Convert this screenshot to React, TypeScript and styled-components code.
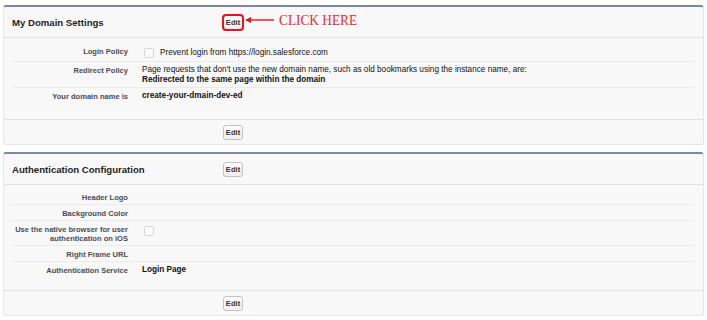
import React from "react";
import styled, { createGlobalStyle } from "styled-components";

const Global = createGlobalStyle`
  html, body { margin: 0; padding: 0; background: #ffffff; }
  body { font-family: "Liberation Sans", Arial, sans-serif; }
`;

const Page = styled.div`
  padding: 5px 3px;
  display: flex;
  flex-direction: column;
  gap: 7px;
`;

const Panel = styled.section`
  background: #f8f8f8;
  border: 1px solid #e6e6e6;
  border-top: 2px solid #7f899e;
  border-radius: 3px;
`;

const Header = styled.div`
  display: flex;
  align-items: center;
  height: 30px;
  padding-left: 8px;
  border-bottom: 1px solid #e2e2e2;
`;

const Title = styled.h2`
  margin: 0;
  width: 211px;
  font-size: 9.6px;
  font-weight: bold;
  color: #1e1e1e;
`;

const Button = styled.button<{ $highlight?: boolean }>`
  width: 20px;
  height: 15px;
  padding: 0;
  font-family: "Liberation Sans", Arial, sans-serif;
  font-size: 7.6px;
  font-weight: bold;
  color: #333;
  background: linear-gradient(#ffffff, #efefef);
  border: 1px solid #c2c2c2;
  border-radius: 3px;
  outline: ${(p) => (p.$highlight ? "2px solid #e8121c" : "none")};
  outline-offset: -1px;
`;

const Annotation = styled.div`
  display: flex;
  align-items: center;
  margin-left: 2px;
  margin-top: -4px;
  gap: 4px;
`;

const ClickHere = styled.span`
  font-family: "Liberation Serif", "Times New Roman", serif;
  font-size: 15.5px;
  color: #ee2a2e;
  display: inline-block;
  transform: scaleX(0.86);
  transform-origin: left center;
`;

const Body = styled.div<{ $bottom: number; $top: number }>`
  padding: ${(p) => p.$top}px 8px ${(p) => p.$bottom}px;
`;

const Row = styled.div<{ $last?: boolean }>`
  display: grid;
  grid-template-columns: 116px 1fr;
  column-gap: 14px;
  align-items: start;
  padding: 3px 0 2px;
  border-bottom: ${(p) => (p.$last ? "none" : "1px solid #ebebeb")};
`;

const Label = styled.div`
  text-align: right;
  font-size: 7.55px;
  line-height: 9px;
  font-weight: bold;
  color: #4b4b57;
  padding-top: 1px;
`;

const Value = styled.div<{ $bold?: boolean }>`
  font-size: 8.2px;
  line-height: 10px;
  color: #111;
  font-weight: ${(p) => (p.$bold ? "bold" : "normal")};
  display: flex;
  align-items: center;
  gap: 6px;
`;

const ValueLines = styled.div`
  font-size: 8.2px;
  line-height: 10px;
  color: #111;
`;

const Strong = styled.div`
  font-weight: bold;
`;

const Check = styled.span`
  display: inline-block;
  box-sizing: border-box;
  width: 10px;
  height: 10px;
  margin: 2px 0 1px 2px;
  border: 1px solid #d6d6d6;
  border-radius: 2px;
  background: #fbfbfb;
  flex: none;
`;

const Footer = styled.div`
  border-top: 1px solid #e2e2e2;
  padding: 5px 0 4px 219px;
  display: flex;
`;

const Arrow = () => (
  <svg width="30" height="8" viewBox="0 0 30 8">
    <line x1="4" y1="4" x2="29" y2="4" stroke="#e8121c" strokeWidth="1.4" />
    <polygon points="0,4 6,1 6,7" fill="#e8121c" />
  </svg>
);

export default function App() {
  return (
    <>
      <Global />
      <Page>
        <Panel>
          <Header>
            <Title>My Domain Settings</Title>
            <Button $highlight>Edit</Button>
            <Annotation>
              <Arrow />
              <ClickHere>CLICK HERE</ClickHere>
            </Annotation>
          </Header>
          <Body $top={5} $bottom={16}>
            <Row>
              <Label>Login Policy</Label>
              <Value>
                <Check />
                Prevent login from https://login.salesforce.com
              </Value>
            </Row>
            <Row>
              <Label>Redirect Policy</Label>
              <ValueLines>
                Page requests that don't use the new domain name, such as old bookmarks using the instance name, are:
                <Strong>Redirected to the same page within the domain</Strong>
              </ValueLines>
            </Row>
            <Row $last>
              <Label>Your domain name is</Label>
              <Value $bold>create-your-dmain-dev-ed</Value>
            </Row>
          </Body>
          <Footer>
            <Button>Edit</Button>
          </Footer>
        </Panel>

        <Panel>
          <Header>
            <Title>Authentication Configuration</Title>
            <Button>Edit</Button>
          </Header>
          <Body $top={4} $bottom={13}>
            <Row>
              <Label>Header Logo</Label>
              <Value />
            </Row>
            <Row>
              <Label>Background Color</Label>
              <Value />
            </Row>
            <Row>
              <Label>
                Use the native browser for user
                <br />
                authentication on iOS
              </Label>
              <Value>
                <Check />
              </Value>
            </Row>
            <Row>
              <Label>Right Frame URL</Label>
              <Value />
            </Row>
            <Row $last>
              <Label>Authentication Service</Label>
              <Value $bold>Login Page</Value>
            </Row>
          </Body>
          <Footer>
            <Button>Edit</Button>
          </Footer>
        </Panel>
      </Page>
    </>
  );
}
